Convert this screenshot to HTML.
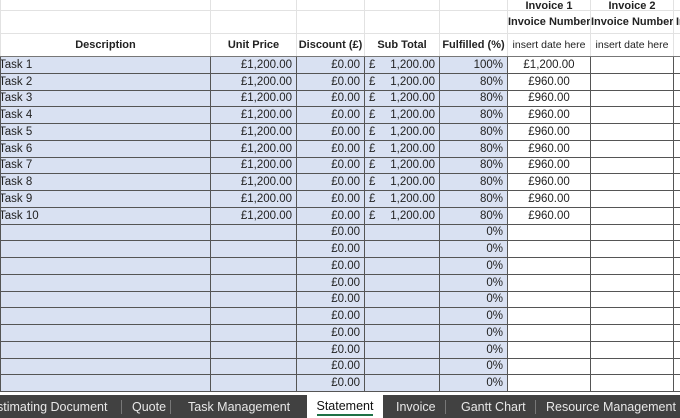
<!DOCTYPE html>
<html><head><meta charset="utf-8"><style>
*{margin:0;padding:0;box-sizing:border-box}
body{width:680px;height:418px;overflow:hidden;background:#fff;font-family:"Liberation Sans",sans-serif;font-size:11.5px;color:#222;position:relative}
table{position:absolute;left:0;top:-1px;border-collapse:collapse;table-layout:fixed;width:693px}
td{height:16.75px;padding:0 4px;white-space:nowrap;overflow:hidden;line-height:14px;border:1px solid #555}
.h td{border:1px solid #e2e2e2;background:#fff;font-weight:bold;text-align:center;padding:0;font-size:11px}
.h1 td{height:11px;line-height:8px;vertical-align:bottom}
.h2 td{border-bottom:1.5px solid #777}
.b{background:#d9e1f2}
.r{text-align:right}.c{text-align:center}
.d{padding-left:0;text-indent:-2px}
.tabs{position:absolute;left:0;top:395px;width:680px;height:23px;background:#414141;color:#e8e8e8;font-size:12.5px}
.tabs span{position:absolute;top:5px}
.sep{position:absolute;top:5px;width:1px;height:14px;background:#777}
.st{position:absolute;left:307px;top:0;width:76px;height:23px;background:#fff;color:#111;text-align:center;line-height:22px}
.st i{position:absolute;left:10px;right:10px;bottom:2px;height:2px;background:#1e7145}
</style></head><body>
<table>
<colgroup><col style="width:210px"><col style="width:86px"><col style="width:68px"><col style="width:75px"><col style="width:68px"><col style="width:83px"><col style="width:83px"><col style="width:20px"></colgroup>
<tr class="h h1"><td></td><td></td><td></td><td></td><td></td><td>Invoice 1</td><td>Invoice 2</td><td></td></tr>
<tr class="h"><td style="height:23px"></td><td></td><td></td><td></td><td></td><td>Invoice Number</td><td>Invoice Number</td><td style="text-align:left;padding:0 2px">In</td></tr>
<tr class="h h2"><td style="height:23px">Description</td><td>Unit Price</td><td>Discount (£)</td><td>Sub Total</td><td>Fulfilled (%)</td><td style="font-weight:normal;font-size:10.5px">insert date here</td><td style="font-weight:normal;font-size:10.5px">insert date here</td><td></td></tr>
<tr><td class="b d">Task 1</td><td class="b r">£1,200.00</td><td class="b r">£0.00</td><td class="b r"><span style="float:left">£</span>1,200.00</td><td class="b r">100%</td><td class="c">£1,200.00</td><td></td><td></td></tr>
<tr><td class="b d">Task 2</td><td class="b r">£1,200.00</td><td class="b r">£0.00</td><td class="b r"><span style="float:left">£</span>1,200.00</td><td class="b r">80%</td><td class="c">£960.00</td><td></td><td></td></tr>
<tr><td class="b d">Task 3</td><td class="b r">£1,200.00</td><td class="b r">£0.00</td><td class="b r"><span style="float:left">£</span>1,200.00</td><td class="b r">80%</td><td class="c">£960.00</td><td></td><td></td></tr>
<tr><td class="b d">Task 4</td><td class="b r">£1,200.00</td><td class="b r">£0.00</td><td class="b r"><span style="float:left">£</span>1,200.00</td><td class="b r">80%</td><td class="c">£960.00</td><td></td><td></td></tr>
<tr><td class="b d">Task 5</td><td class="b r">£1,200.00</td><td class="b r">£0.00</td><td class="b r"><span style="float:left">£</span>1,200.00</td><td class="b r">80%</td><td class="c">£960.00</td><td></td><td></td></tr>
<tr><td class="b d">Task 6</td><td class="b r">£1,200.00</td><td class="b r">£0.00</td><td class="b r"><span style="float:left">£</span>1,200.00</td><td class="b r">80%</td><td class="c">£960.00</td><td></td><td></td></tr>
<tr><td class="b d">Task 7</td><td class="b r">£1,200.00</td><td class="b r">£0.00</td><td class="b r"><span style="float:left">£</span>1,200.00</td><td class="b r">80%</td><td class="c">£960.00</td><td></td><td></td></tr>
<tr><td class="b d">Task 8</td><td class="b r">£1,200.00</td><td class="b r">£0.00</td><td class="b r"><span style="float:left">£</span>1,200.00</td><td class="b r">80%</td><td class="c">£960.00</td><td></td><td></td></tr>
<tr><td class="b d">Task 9</td><td class="b r">£1,200.00</td><td class="b r">£0.00</td><td class="b r"><span style="float:left">£</span>1,200.00</td><td class="b r">80%</td><td class="c">£960.00</td><td></td><td></td></tr>
<tr><td class="b d">Task 10</td><td class="b r">£1,200.00</td><td class="b r">£0.00</td><td class="b r"><span style="float:left">£</span>1,200.00</td><td class="b r">80%</td><td class="c">£960.00</td><td></td><td></td></tr>
<tr><td class="b"></td><td class="b"></td><td class="b r">£0.00</td><td class="b"></td><td class="b r">0%</td><td></td><td></td><td></td></tr>
<tr><td class="b"></td><td class="b"></td><td class="b r">£0.00</td><td class="b"></td><td class="b r">0%</td><td></td><td></td><td></td></tr>
<tr><td class="b"></td><td class="b"></td><td class="b r">£0.00</td><td class="b"></td><td class="b r">0%</td><td></td><td></td><td></td></tr>
<tr><td class="b"></td><td class="b"></td><td class="b r">£0.00</td><td class="b"></td><td class="b r">0%</td><td></td><td></td><td></td></tr>
<tr><td class="b"></td><td class="b"></td><td class="b r">£0.00</td><td class="b"></td><td class="b r">0%</td><td></td><td></td><td></td></tr>
<tr><td class="b"></td><td class="b"></td><td class="b r">£0.00</td><td class="b"></td><td class="b r">0%</td><td></td><td></td><td></td></tr>
<tr><td class="b"></td><td class="b"></td><td class="b r">£0.00</td><td class="b"></td><td class="b r">0%</td><td></td><td></td><td></td></tr>
<tr><td class="b"></td><td class="b"></td><td class="b r">£0.00</td><td class="b"></td><td class="b r">0%</td><td></td><td></td><td></td></tr>
<tr><td class="b"></td><td class="b"></td><td class="b r">£0.00</td><td class="b"></td><td class="b r">0%</td><td></td><td></td><td></td></tr>
<tr><td class="b"></td><td class="b"></td><td class="b r">£0.00</td><td class="b"></td><td class="b r">0%</td><td></td><td></td><td></td></tr>
</table>
<div class="tabs">
<span style="left:-3px">stimating Document</span><div class="sep" style="left:121px"></div>
<span style="left:132px">Quote</span><div class="sep" style="left:170px"></div>
<span style="left:188px">Task Management</span>
<div class="st">Statement<i></i></div>
<span style="left:396px">Invoice</span><div class="sep" style="left:445px"></div>
<span style="left:461px">Gantt Chart</span><div class="sep" style="left:535px"></div>
<span style="left:546px">Resource Management</span>
</div>
</body></html>
